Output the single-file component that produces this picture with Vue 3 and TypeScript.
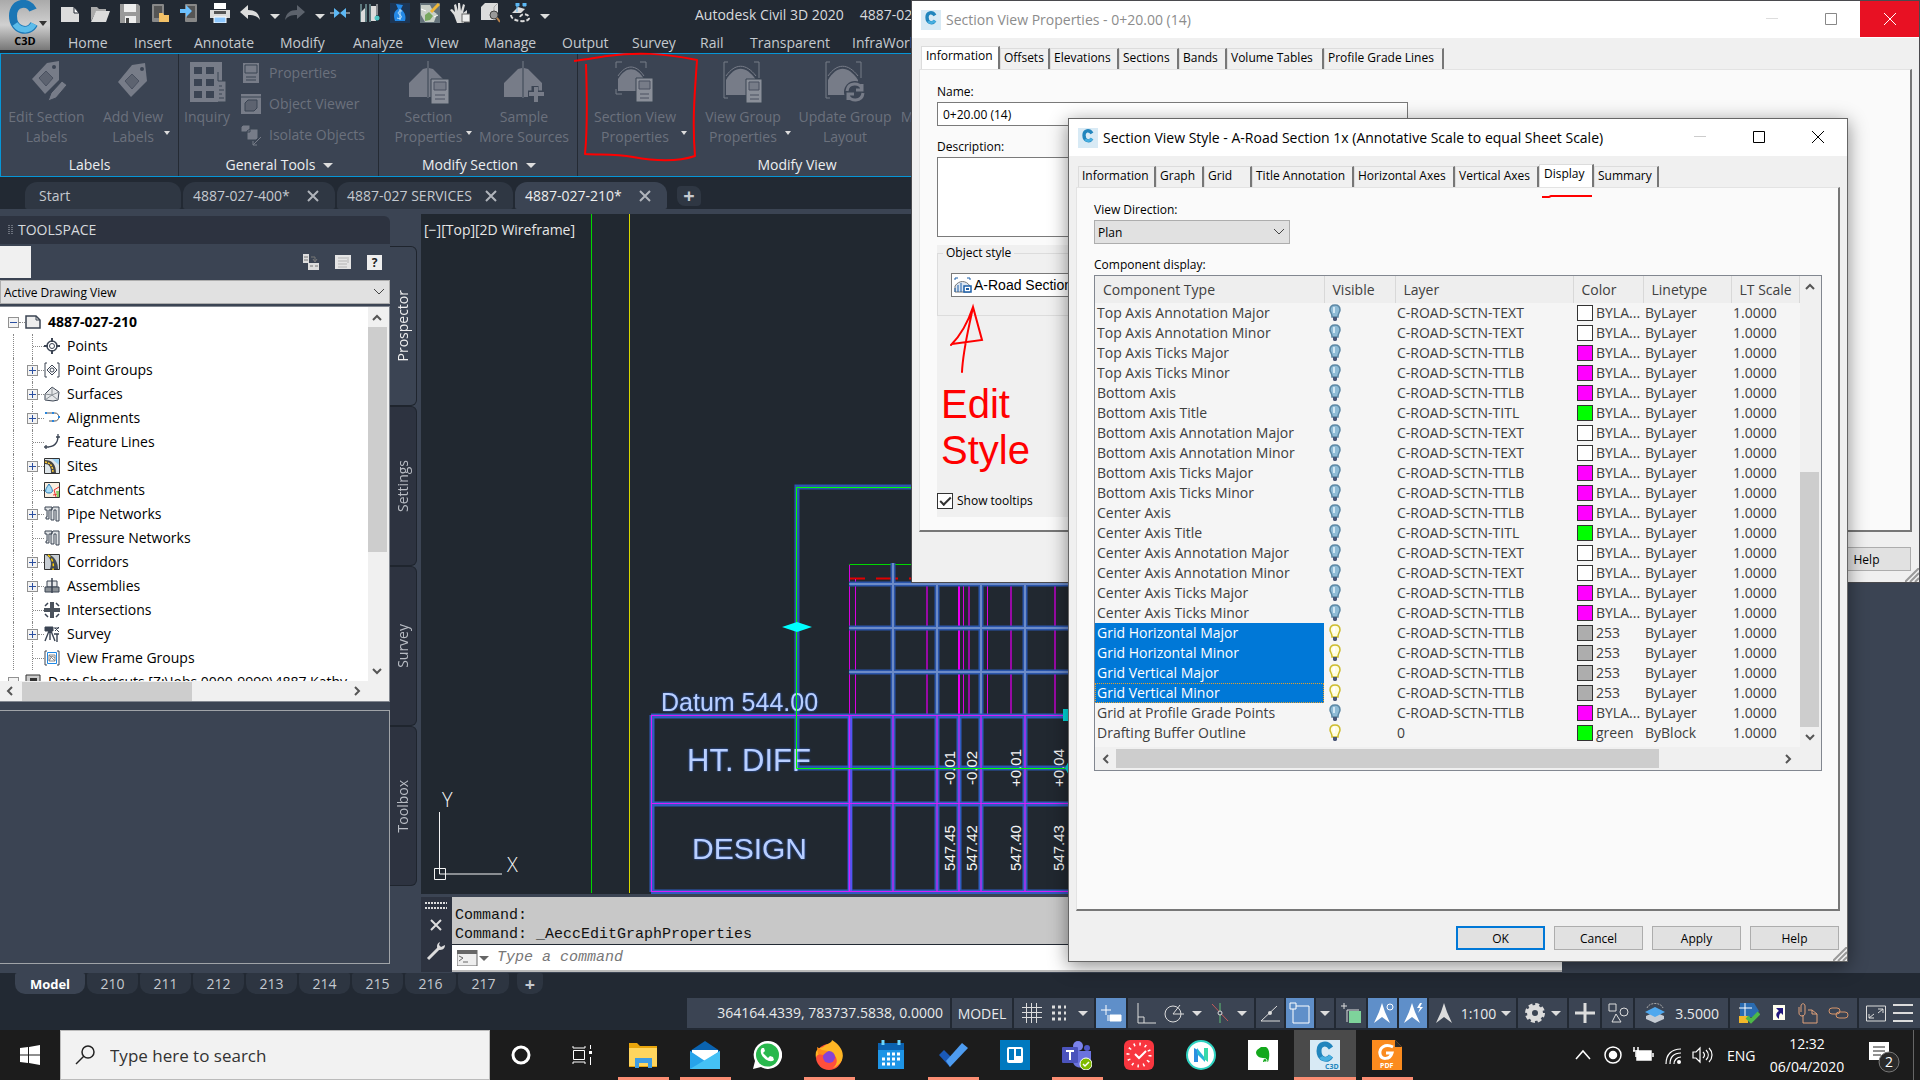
<script setup lang="ts">
import { ref } from 'vue'

interface Tab { label: string; width: number }
interface TreeNode { label: string; icon: string; expandable: boolean }
interface StyleRow { name: string; on?: boolean; layer: string; color: string; colorName: string; linetype?: string; selected?: boolean }
interface RibbonButton { icon: string; lines: string[]; width: number; menu?: boolean }

const light = '#dcdcdc'
const dim = '#777c88'

const icons: Record<string, string> = {
  new: `<path d="M1 4h13l5 6v9H1z" fill="${light}"/><path d="M14 4v6h5z" fill="#fff" stroke="#222933"/>`,
  open: `<path d="M1 18V4h6l2 2h7v3H6z" fill="#aaa"/><path d="M1 19 6 8h14l-4 11z" fill="${light}"/>`,
  save: `<path d="M0 1h18l2 2v17H0z" fill="#999"/><path d="M4 1h12v8H4zM5 13h11v7H5z" fill="#eee"/><path d="M6 15h3v5H6z" fill="#444"/>`,
  tabletOpen: `<rect x="2" y="1" width="12" height="18" rx="1" fill="#888"/><rect x="4" y="3" width="8" height="12" fill="#555"/><path d="M9 19v-9h4l1 2h5v7z" fill="#f3c167"/>`,
  tabletSave: `<rect x="5" y="1" width="12" height="18" rx="1" fill="#888"/><rect x="7" y="3" width="8" height="12" fill="#555"/><path d="M0 6h6V2l6 6-6 6V10H0z" fill="#6cc0ff"/>`,
  print: `<path d="M4 0h12v6H4z" fill="#fff"/><path d="M0 7h20v8H0z" fill="${light}"/><path d="M4 8h12v3H4z" fill="#555"/><path d="M4 14h12v6H4z" fill="#8ec8ff" stroke="#fff"/>`,
  undo: `<path d="M0 9 8 2v5c7 0 11 3 12 10-3-4-6-5-12-5v4z" fill="${light}"/>`,
  redo: `<path d="M20 9 12 2v5C5 7 1 10 0 17c3-4 6-5 12-5v4z" fill="#5c626c"/>`,
  match: `<path d="M0 10h5M15 10h5" stroke="${light}"/><path d="M4 5l6 5-6 5zM16 5l-6 5 6 5z" fill="#5db8f5"/>`,
  sheets: `<path d="M1 1v18M6 1v18M10 1v18" stroke="#9cc" stroke-width="1"/><path d="M1 9l4-4v14H1zM11 3h5v15h-5z" fill="${light}"/><path d="M17 1v11" stroke="#eee"/><circle cx="17" cy="15" r="2.500" fill="#4dc4c4"/>`,
  bag: `<rect width="20" height="20" fill="#1c3554"/><path d="M6 1l7 1-2 4c5 4 5 9 4 12H5C3 12 4 8 8 6z" fill="#2389e8"/><path d="M12 8c-4-1-5 3-2 4s1 5-3 3M10 6v11" stroke="#bde3ff" fill="none"/>`,
  map: `<rect width="20" height="20" fill="#65737b"/><path d="M1 2h9l3 6 4 3-3 8H5L1 12z" fill="#c9d0c8"/><path d="M19 1l-8 8" stroke="#f0b838" stroke-width="3"/><path d="M5 12l4-3 4 4-3 4-5 1z" fill="#78a860"/><path d="M1 6l5 2M14 14l4-2" stroke="#fff"/>`,
  hand: `<path d="M4 12 0 7l2-1 3 3L4 2l2-1 2 7V0h2l1 8 2-7 2 1-2 8 4-3v3l-3 7v3H7z" fill="${light}"/><rect x="12" y="11" width="8" height="8" fill="#eee" stroke="#666"/>`,
  boxZoom: `<path d="M1 4 5 0h13v14l-3 3H1z" fill="${light}"/><path d="M14 4v12M14 4l4-4" stroke="#aaa"/><circle cx="14" cy="12" r="4" fill="#999" stroke="#444"/><path d="m17 15 3 4" stroke="#b8824c" stroke-width="2"/>`,
  orbit: `<path d="M8 4 2 10h9l4-4z" fill="${light}"/><path d="M6 0h3v3H6zM13 0h3v3h-3zM7 1v8" fill="#5db8f5" stroke="#5db8f5"/><path d="M1 12c0 7 18 8 18 3s-8-5-9-1" fill="none" stroke="${light}" stroke-width="2" stroke-dasharray="4 2"/>`,
  points: `<circle cx="8" cy="8" r="5" fill="none" stroke="#3b4453" stroke-width="1.5"/><circle cx="8" cy="8" r="2.500" fill="none" stroke="#3b4453"/><path d="M8 0v4M8 12v4M0 8h4M12 8h4" stroke="#3b4453" stroke-width="2"/>`,
  pointGroups: `<path d="M3 1H1v14h2M13 1h2v14h-2" fill="none" stroke="#3b4453"/><path d="m8 3 5 5-5 5-5-5z" fill="none" stroke="#3b4453"/><circle cx="8" cy="8" r="2" fill="none" stroke="#3b4453"/>`,
  surfaces: `<path d="M8 1l7 5-1 8-5 1-8-1V8z" fill="#e6e8ea" stroke="#3b4453"/><path d="M8 1v8l6 5M8 9l7-3M8 9l-7-1M8 9l-7 5" stroke="#8b9197" fill="none"/>`,
  alignments: `<path d="M1 3h10c5 0 5 8 0 8H5" fill="none" stroke="#555"/><path d="M2 2v2M9 2v2M15 6v2M9 10v2" stroke="#2585e0" stroke-width="2"/>`,
  feature: `<path d="M2 13c8 0 12-3 12-11M0 13h5M2 11v4M12 3h4M14 0v4" fill="none" stroke="#3b4453" stroke-width="1.3"/>`,
  sites: `<path d="M.5.500h15v15H.5z" fill="#dfe6ea" stroke="#333"/><path d="M8 1h7v6z" fill="#9bd2f5"/><path d="M1 2c7 0 11 4 11 13H7c0-6-2-9-6-9z" fill="#444"/><path d="M1 4c6 1 8 5 8 11" stroke="#fc3" stroke-dasharray="2 1" stroke-width="1.500" fill="none"/>`,
  catchments: `<path d="M.5.500h15v15H.5z" fill="#f9eee0" stroke="#333"/><path d="M5 2c5 7 4 9 0 9s-5-2 0-9z" fill="#a9dcf5" stroke="#2b7db5"/><path d="M10 8l5-3M9 13l6-1M10 8l2 7" stroke="#e33"/><path d="M12 9h3v6h-2z" fill="#8c6"/>`,
  pipes: `<path d="M1 1h7v3H5v9H2v-2h1V4H1zM9 1h6v14h-3V4h-2v10H7V4z" fill="#dfe2e5" stroke="#3b4453"/>`,
  corridors: `<path d="M.5.500h15v15H.5z" fill="#c8ced4" stroke="#333"/><path d="M2 1c5 3 6 8 4 14h8C14 9 11 3 6 1z" fill="#444a52"/><path d="M4 1c5 4 6 9 5 15" stroke="#fc0" stroke-width="1.5" stroke-dasharray="3 2" fill="none"/>`,
  assemblies: `<path d="M3 3h10v6H3z" fill="#e6e8ea" stroke="#3b4453"/><path d="M1 9h14v5H1z" fill="#8b9197" stroke="#3b4453"/><path d="M8 0v15" stroke="#3b4453" stroke-width="1.5"/>`,
  intersections: `<path d="M6 0h4v6h6v4h-6v6H6v-6H0V6h6z" fill="#4b525c"/><path d="M1 4l3-3M15 4l-3-3M1 12l3 3M15 12l-3 3" stroke="#3b4453" stroke-width="1.5"/>`,
  survey: `<path d="M1 1h8v4H1zM10 2h5M11 5l4-4M11 2l4 4" fill="#3b4453" stroke="#3b4453"/><path d="M5 5 1 15M6 5v9M7 5l4 10M10 8h5M13 8v8" stroke="#3b4453" stroke-width="1.4"/>`,
  frames: `<path d="M3 1H1v14h2M13 1h2v14h-2" fill="none" stroke="#3b4453"/><path d="M3.500 2.500h9v11h-9z" fill="#fff" stroke="#1e88e5"/><path d="M5 5h6v6H5zM5 5l6 6M5 11l3-5 3 2" stroke="#888" fill="none"/>`,
  tag: `<path d="M33 2 20 4 6 21l13 15 16-16z" fill="${dim}"/><path d="m20 13 7 7-7 8-7-8z" fill="#5d6370" stroke="#4a5160"/><circle cx="30" cy="8" r="2" fill="#3b4453"/>`,
  tagEdit: `<path d="M33 0 21 2 6 18l13 15 14-14z" fill="${dim}"/><path d="m20 10 7 7-7 8-7-8z" fill="#5d6370" stroke="#4a5160"/><circle cx="28" cy="6" r="2" fill="#3b4453"/><path d="m22 40 3-8 11-12 5 4-11 13z" fill="${dim}" stroke="#3b4453"/>`,
  inquiry: `<path d="M4 1h32v40H4z" fill="${dim}"/><path d="M8 6h8v7H8zM20 6h8v7h-8zM8 18h8v7H8zM20 18h8v7h-8zM8 30h8v7H8zM20 30h8v7h-8z" fill="#3b4453"/><path d="M32 11v9h8v21h-8" fill="${dim}" stroke="#3b4453"/><path d="M33 25h3M33 29h5M33 33h3M33 37h5" stroke="#3b4453"/>`,
  section: `<path d="M1 36V22L15 8l4-1v29zM21 7l4 1 14 14v14H21z" fill="${dim}"/><path d="M20 0v37" stroke="${dim}"/>`,
  sectionProps: `<path d="M1 36V22L15 8l4-1v29zM21 7l4 1 14 14v14H21z" fill="${dim}"/><path d="M20 0v37" stroke="${dim}"/><path d="M23 18h18v25H23z" fill="#8a8f99" stroke="#3b4453"/><path d="M26 21h12v8H26zM27 34h10M27 38h10" stroke="#4a5160" fill="${dim}"/>`,
  sectionAdd: `<path d="M1 36V22L15 8l4-1v29zM21 7l4 1 14 14v14H21z" fill="${dim}"/><path d="M20 0v37" stroke="${dim}"/><path d="M32 25v17M25 33h16" stroke="#3b4453" stroke-width="7"/><path d="M33 26v15M26 33h15" stroke="${dim}" stroke-width="4"/>`,
  viewProps: `<path d="M8 1H2v6M26 1h6v6M2 28v5h6" fill="none" stroke="${dim}"/><path d="M4 30V18C12 5 22 5 30 18v12z" fill="${dim}"/><path d="M4 15C12 3 22 3 30 15" fill="none" stroke="${dim}"/><path d="M22 17h17v24H22z" fill="#8a8f99" stroke="#3b4453"/><path d="M25 20h11v8H25zM26 33h9M26 37h9" stroke="#4a5160" fill="${dim}"/>`,
  groupProps: `<path d="M6 1H2v36h4M32 1h5v16" fill="none" stroke="${dim}"/><path d="M4 34V19C13 4 24 4 34 19v15z" fill="${dim}"/><path d="M4 15C13 2 24 2 34 15" fill="none" stroke="${dim}"/><path d="M24 18h16v24H24z" fill="#8a8f99" stroke="#3b4453"/><path d="M27 21h10v8H27zM28 34h9M28 38h9" stroke="#4a5160" fill="${dim}"/>`,
  groupUpdate: `<path d="M6 1H2v36h4M32 1h5v16" fill="none" stroke="${dim}"/><path d="M4 34V19C13 4 24 4 34 19v15z" fill="${dim}"/><path d="M4 15C13 2 24 2 34 15" fill="none" stroke="${dim}"/><circle cx="31" cy="31" r="11" fill="#3b4453"/><path d="M23 30c1-9 13-9 15-2M39 32c-1 9-13 9-15 2M38 23v6h-6M24 39v-6h6" fill="none" stroke="${dim}" stroke-width="3"/>`,
  grid: `<path d="M4.500 0v20M9.500 0v20M14.500 0v20M0 4.500h20M0 9.500h20M0 14.500h20" stroke="${light}" stroke-width="1"/>`,
  snap: `<path d="M2 4h14M2 10h14M2 16h14" stroke="${light}" stroke-width="3" stroke-dasharray="3 3"/>`,
  dyn: `<path d="M5 2v10M0 7h10" stroke="#fff"/><path d="M9 12h11v6H9z" fill="#fff" stroke="#fff"/><path d="M7 12v6" stroke="#fff"/>`,
  ortho: `<path d="M2 0v20h18M2 14h6v6" fill="none" stroke="${light}"/>`,
  polar: `<circle cx="9" cy="11" r="8" fill="none" stroke="${light}"/><path d="M20 11H9l7-9" fill="none" stroke="${light}"/>`,
  iso: `<path d="M10 0v20" stroke="#5fbf75"/><path d="m2 1 16 17" stroke="#c55a5a"/><circle cx="10" cy="10" r="2" fill="#3b4453" stroke="${light}"/>`,
  track: `<path d="M1 18h19M1 18 17 3" stroke="${light}"/><circle cx="10" cy="10" r="2" fill="${light}"/>`,
  osnap: `<path d="M3 3h16v17H3z" fill="none" stroke="#fff"/><path d="M0 0h6v6H0z" fill="#6090c8" stroke="#fff"/>`,
  cycle: `<path d="M3 0v6M0 3h6M6 19V7h12" stroke="${light}" fill="none"/><path d="M8 8h12v12H8z" fill="#7ed39b"/>`,
  annoA: `<path d="m9 0 3 9 5 11-8-6-8 6 5-11z" fill="#fff"/><circle cx="17" cy="4" r="3" fill="none" stroke="#fff"/>`,
  annoB: `<path d="m9 0 3 9 5 11-8-6-8 6 5-11z" fill="#fff"/><path d="m17 0-3 5h3l-2 5 5-6h-3l2-4z" fill="#fff"/>`,
  anno: `<path d="m9 0 3 9 5 11-8-6-8 6 5-11z" fill="${light}"/>`,
  gear: `<circle cx="10" cy="10" r="5.500" fill="none" stroke="${light}" stroke-width="5"/><circle cx="10" cy="10" r="8.500" fill="none" stroke="${light}" stroke-width="3" stroke-dasharray="4 2.670"/>`,
  plus: `<path d="M10 0v20M0 10h20" stroke="${light}" stroke-width="3"/>`,
  isolate: `<path d="M1 1h7v7H1zM4 19l4-8 5 8z" fill="none" stroke="${light}"/><circle cx="16" cy="9" r="4" fill="none" stroke="${light}"/>`,
  layers: `<path d="m10 9 9 4v3l-9 4-9-4v-3z" fill="#c6ccd4"/><path d="m10 4 10 5-10 5L0 9z" fill="#4fa8ee"/><path d="M2 5c2-6 14-6 16 0" fill="none" stroke="#aaa" stroke-dasharray="2 1"/>`,
  geo: `<path d="M1 0h14l5 8-5 6H1z" fill="#2a6bb0"/><path d="M6 0v14M0 5h13" stroke="#fff"/><path d="M0 13h9v7H0z" fill="#f3b82a"/><path d="m8 14 4 4 8-8" fill="none" stroke="#4db848" stroke-width="4"/>`,
  xref: `<path d="M4 2h12v15H4z" fill="#ffe"/><path d="M7 5h7v7l-2-2c-2 1-2 3-2 6-5-4-2-7 0-8z" fill="#22187d"/>`,
  clipDoc: `<path d="M5 12v8h14V11l-5-4h-4M14 7v4h5" fill="none" stroke="#e0a07a"/><path d="M1 4v6c0 4 6 4 6 0V3c0-3-4-3-4 0v6" fill="none" stroke="#e0a07a"/>`,
  link: `<rect x="1" y="5" width="11" height="6" rx="3" fill="none" stroke="#d7956a"/><rect x="8" y="9" width="12" height="6" rx="3" fill="none" stroke="#d7956a"/>`,
  clean: `<path d="M.5 3h19v15H.5z" fill="none" stroke="${light}"/><path d="m3 15 5-4M17 6l-5 4M3 11v4h5M17 10V6h-5" stroke="${light}" fill="none"/>`,
  menu: `<path d="M0 2h20M0 10h20M0 18h20" stroke="${light}" stroke-width="2"/>`,
  explorer: `<path d="M1 3h8l3 3h17v21H1z" fill="#e9a50b"/><path d="M1 8h28v18H1z" fill="#ffd55e"/><path d="M7 28V18h17v10h-4v-5h-9v5z" fill="#3f9de3"/>`,
  mail: `<path d="M0 11 15 1l15 10v17H0z" fill="#0a63b0"/><path d="M2 10h26v11H2z" fill="#fff"/><path d="m0 11 15 10L30 11v18H0z" fill="#27a3ea"/><path d="M0 29 30 11v18z" fill="#45c1f5"/>`,
  whatsapp: `<path d="M15 1a14 14 0 1 1-6 26l-8 2 2-8A14 14 0 0 1 15 1z" fill="#fff"/><circle cx="15.500" cy="15" r="11.500" fill="#29b84d"/><path d="M10 8c-5 5 6 17 12 12l-1-3-3-1-2 2-5-5 2-2-1-3z" fill="#fff"/>`,
  firefox: `<circle cx="15" cy="17" r="13" fill="#ff4f3c"/><path d="M2 18C0 7 8 8 9 7c3-3 9-4 9-7 8 5 14 13 9 22-4 5-8 6-8 6 8-7 2-16-6-16-5 0-11 3-11 6z" fill="#ffb524"/><circle cx="15" cy="17" r="6" fill="#8743d6"/><path d="M3 7l5 3 6 1-5 4-5-1z" fill="#ff8c1a"/>`,
  calendar: `<path d="M2 3h26v26H2z" fill="#1e95e6"/><path d="M2 3h26v7H2z" fill="#0b62b0"/><path d="M7 0v5M23 0v5" stroke="#6cd6ff" stroke-width="3"/><path d="M11 14h14M6 19h19M6 24h14" stroke="#fff" stroke-width="3" stroke-dasharray="3 2"/>`,
  todo: `<path d="M1 15 6 10l7 7-1 10z" fill="#1a59b8"/><path d="M8 21 24 3l6 5-18 19z" fill="#4e9cf0"/>`,
  trello: `<path d="M0 0h30v30H0z" fill="#0079bf"/><rect x="7" y="7" width="16" height="16" rx="2" fill="#fff"/><path d="M9 9h5v11H9zM16 9h5v7h-5z" fill="#0079bf"/>`,
  teams: `<circle cx="16" cy="6" r="5" fill="#7b83eb"/><circle cx="25" cy="8" r="3" fill="#5059c9"/><path d="M11 11h18v10c-3 7-16 10-18 1z" fill="#6b73df"/><rect y="7" width="16" height="16" rx="1" fill="#4b53bc"/><path d="M4 11h8M8 11v9" stroke="#fff" stroke-width="2"/><circle cx="24" cy="24" r="6" fill="#7fba00" stroke="#fff"/><path d="m21 24 2 2 4-4" stroke="#fff" fill="none" stroke-width="1.500"/>`,
  clock: `<rect width="30" height="30" rx="6" fill="#f8363f"/><circle cx="15" cy="15" r="11" fill="none" stroke="#fff" stroke-width="3" stroke-dasharray="1.500 4.260"/><path d="m11 14 4 4 7-7" fill="none" stroke="#fff" stroke-width="2"/>`,
  nitro: `<circle cx="15" cy="15" r="14" fill="#fff" stroke="#2fd3c2" stroke-width="2"/><path d="M8 8l4 2v12H8z" fill="#2b8fe0"/><path d="M11 8l8 10v4L11 14z" fill="#25b6d8"/><path d="M18 8h4v14l-4-3z" fill="#36d9a8"/>`,
  evernote: `<path d="M0 0h30v30H0z" fill="#fff"/><path d="M9 10l4-3h5c4 2 4 10 2 15h-5l1-4c-3 0-8-1-8-6z" fill="#13a81c"/><path d="M15 19c3-1 4 0 4 3h-3" stroke="#fff" fill="none"/>`,
  civil: `<path d="M0 0h30v30H0z" fill="#d8eaf5"/><path d="M21 8C17 2 9 3 9 11s8 11 12 5" fill="none" stroke="#2185bd" stroke-width="5"/><path d="M11 17c2 3 7 3 10-1" fill="none" stroke="#47afe0" stroke-width="4"/>`,
  foxit: `<path d="M0 0h23l7 7v23H0z" fill="#fb8b1e"/><path d="M23 0v7h7z" fill="#2a2a2a"/><path d="M21 7C13 3 7 8 8 14s10 6 12-1h-6" fill="none" stroke="#fff" stroke-width="3"/>`,
}

const quick = ['new', 'open', 'save', 'tabletOpen', 'tabletSave', 'print', 'undo', 'caret', 'redo', 'caret', 'match', 'sheets', 'bag', 'map', 'hand', 'boxZoom', 'orbit', 'caret']
const menus = ['Home', 'Insert', 'Annotate', 'Modify', 'Analyze', 'View', 'Manage', 'Output', 'Survey', 'Rail', 'Transparent', 'InfraWorks']

const labelButtons: RibbonButton[] = [
  { icon: 'tagEdit', lines: ['Edit Section', 'Labels'], width: 91 },
  { icon: 'tag', lines: ['Add View', 'Labels'], width: 82, menu: true },
]
const sectionButtons: RibbonButton[] = [
  { icon: 'sectionProps', lines: ['Section', 'Properties'], width: 95, menu: true },
  { icon: 'sectionAdd', lines: ['Sample', 'More Sources'], width: 96 },
]
const viewButtons: RibbonButton[] = [
  { icon: 'viewProps', lines: ['Section View', 'Properties'], width: 112, menu: true },
  { icon: 'groupProps', lines: ['View Group', 'Properties'], width: 104, menu: true },
  { icon: 'groupUpdate', lines: ['Update Group', 'Layout'], width: 100 },
]

const files: Tab[] = [
  { label: 'Start', width: 156 },
  { label: '4887-027-400*', width: 152 },
  { label: '4887-027 SERVICES', width: 176 },
  { label: '4887-027-210*', width: 152 },
]
const activeFile = ref(3)

const tree: TreeNode[] = [
  { label: 'Points', icon: 'points', expandable: false },
  { label: 'Point Groups', icon: 'pointGroups', expandable: true },
  { label: 'Surfaces', icon: 'surfaces', expandable: true },
  { label: 'Alignments', icon: 'alignments', expandable: true },
  { label: 'Feature Lines', icon: 'feature', expandable: false },
  { label: 'Sites', icon: 'sites', expandable: true },
  { label: 'Catchments', icon: 'catchments', expandable: false },
  { label: 'Pipe Networks', icon: 'pipes', expandable: true },
  { label: 'Pressure Networks', icon: 'pipes', expandable: false },
  { label: 'Corridors', icon: 'corridors', expandable: true },
  { label: 'Assemblies', icon: 'assemblies', expandable: true },
  { label: 'Intersections', icon: 'intersections', expandable: false },
  { label: 'Survey', icon: 'survey', expandable: true },
  { label: 'View Frame Groups', icon: 'frames', expandable: false },
]
const sideTabs = ['Prospector', 'Settings', 'Survey', 'Toolbox']
const layouts = ['210', '211', '212', '213', '214', '215', '216', '217']

const bandColumns = [
  { x: 950, diff: '-0.01', design: '547.45' },
  { x: 972, diff: '-0.02', design: '547.42' },
  { x: 1016, diff: '+0.01', design: '547.40' },
  { x: 1059, diff: '+0.04', design: '547.43' },
]

const propertyTabs: Tab[] = [
  { label: 'Information', width: 79 },
  { label: 'Offsets', width: 50 },
  { label: 'Elevations', width: 69 },
  { label: 'Sections', width: 60 },
  { label: 'Bands', width: 48 },
  { label: 'Volume Tables', width: 97 },
  { label: 'Profile Grade Lines', width: 120 },
]
const styleTabs: Tab[] = [
  { label: 'Information', width: 78 },
  { label: 'Graph', width: 48 },
  { label: 'Grid', width: 48 },
  { label: 'Title Annotation', width: 102 },
  { label: 'Horizontal Axes', width: 101 },
  { label: 'Vertical Axes', width: 84 },
  { label: 'Display', width: 55 },
  { label: 'Summary', width: 65 },
]

const text = 'C-ROAD-SCTN-TEXT'
const ttlb = 'C-ROAD-SCTN-TTLB'
const titl = 'C-ROAD-SCTN-TITL'
const row = (name: string, layer: string): StyleRow => ({
  name, layer, colorName: 'BYLA...',
  color: layer === text ? '#ffffff' : layer === titl ? '#00ff00' : '#ff00ff',
})
const gridRow = (name: string): StyleRow => ({ name, on: true, layer: ttlb, color: '#adadad', colorName: '253', selected: true })
const rows: StyleRow[] = [
  row('Top Axis Annotation Major', text),
  row('Top Axis Annotation Minor', text),
  row('Top Axis Ticks Major', ttlb),
  row('Top Axis Ticks Minor', ttlb),
  row('Bottom Axis', ttlb),
  row('Bottom Axis Title', titl),
  row('Bottom Axis Annotation Major', text),
  row('Bottom Axis Annotation Minor', text),
  row('Bottom Axis Ticks Major', ttlb),
  row('Bottom Axis Ticks Minor', ttlb),
  row('Center Axis', ttlb),
  row('Center Axis Title', titl),
  row('Center Axis Annotation Major', text),
  row('Center Axis Annotation Minor', text),
  row('Center Axis Ticks Major', ttlb),
  row('Center Axis Ticks Minor', ttlb),
  gridRow('Grid Horizontal Major'),
  gridRow('Grid Horizontal Minor'),
  gridRow('Grid Vertical Major'),
  gridRow('Grid Vertical Minor'),
  row('Grid at Profile Grade Points', ttlb),
  { name: 'Drafting Buffer Outline', on: true, layer: '0', color: '#00ff00', colorName: 'green', linetype: 'ByBlock' },
]

const status: { width: number; items: string[]; on?: boolean }[] = [
  { width: 80, items: ['grid', 'snap', 'caret'] },
  { width: 30, items: ['dyn'], on: true },
  { width: 126, items: ['ortho', 'polar', 'caret', 'iso', 'caret'] },
  { width: 28, items: ['track'] },
  { width: 28, items: ['osnap'], on: true },
  { width: 18, items: ['caret'] },
  { width: 30, items: ['cycle'] },
  { width: 29, items: ['annoA'], on: true },
  { width: 28, items: ['annoB'], on: true },
  { width: 87, items: ['anno', '=1:100', 'caret'] },
  { width: 49, items: ['gear', 'caret'] },
  { width: 31, items: ['plus'] },
  { width: 31, items: ['isolate'] },
  { width: 93, items: ['layers', '=3.5000'] },
  { width: 127, items: ['geo', 'xref', 'clipDoc', 'link'] },
  { width: 61, items: ['clean', 'menu'] },
]

const apps = [
  { icon: 'explorer', open: true }, { icon: 'mail', open: true }, { icon: 'whatsapp', open: false },
  { icon: 'firefox', open: true }, { icon: 'calendar', open: false }, { icon: 'todo', open: true },
  { icon: 'trello', open: false }, { icon: 'teams', open: true }, { icon: 'clock', open: false },
  { icon: 'nitro', open: false }, { icon: 'evernote', open: false }, { icon: 'civil', open: true },
  { icon: 'foxit', open: true },
]

const command = ref('')
const search = ref('')
const sectionName = ref('0+20.00 (14)')
const tooltips = ref(true)
</script>

<template>
  <div class="desktop">
    <header class="top">
      <button class="appmenu" aria-label="Application menu">
        <svg width="46" height="34" viewBox="0 0 46 34">
          <path d="M31 10C27 1 11 1 11 16s16 18 21 8" fill="none" stroke="#1b76b5" stroke-width="8" />
          <path d="M13 24c5 7 14 8 19 0" fill="none" stroke="#5cbcea" stroke-width="6" />
          <path d="M37 21h8l-4 5z" fill="#333" />
        </svg>
        <b>C3D</b>
      </button>
      <div class="bars">
        <div class="quick">
          <template v-for="(q, i) in quick" :key="i">
            <button v-if="q === 'caret'" class="mini" aria-label="More"><i class="caret"></i></button>
            <button v-else class="qbtn" :aria-label="q"><svg width="20" height="20" viewBox="0 0 20 20" v-html="icons[q]"></svg></button>
          </template>
          <span class="apptitle"><span>Autodesk Civil 3D 2020</span><span>4887-027-210.dwg</span></span>
        </div>
        <nav class="menus"><a v-for="m in menus" :key="m" href="#">{{ m }}</a></nav>
      </div>
    </header>

    <section class="ribbon">
      <div class="panel p-labels">
        <div class="tools">
          <button v-for="b in labelButtons" :key="b.lines[0]" class="big" :style="{ width: b.width + 'px' }">
            <svg width="42" height="44" viewBox="0 0 42 44" v-html="icons[b.icon]"></svg>
            <span v-for="l in b.lines" :key="l">{{ l }}</span><i v-if="b.menu" class="caret tiny"></i>
          </button>
        </div>
        <h2>Labels</h2>
      </div>
      <div class="panel p-general">
        <div class="tools">
          <button class="big inquiry"><svg width="42" height="44" viewBox="0 0 42 44" v-html="icons.inquiry"></svg><span>Inquiry</span></button>
          <div class="stack">
            <button><svg width="20" height="22" viewBox="0 0 20 22"><path d="M2 1h16v20H2z" :fill="dim" /><path d="M4 3h12v8H4zM5 15h10M5 18h10" fill="none" stroke="#3b4453" /></svg>Properties</button>
            <button><svg width="20" height="22" viewBox="0 0 20 22"><path d="M0 1h20v20H0z" :fill="dim" /><path d="M0 4h20M4 10l3-3h9v8l-3 3H4z" fill="#5d6370" stroke="#3b4453" /></svg>Object Viewer</button>
            <button><svg width="20" height="22" viewBox="0 0 20 22"><path d="M0 3l2-2h7v7H0zM6 7l3-2h8v9l-2 2H6z" :fill="dim" stroke="#3b4453" /><path d="m20 13-8 8M12 17v4h4" stroke="#777c88" fill="none" /></svg>Isolate Objects</button>
          </div>
        </div>
        <h2>General Tools <i class="caret"></i></h2>
      </div>
      <div class="panel p-section">
        <div class="tools">
          <button v-for="b in sectionButtons" :key="b.lines[0]" class="big" :style="{ width: b.width + 'px' }">
            <svg width="42" height="44" viewBox="0 0 42 44" v-html="icons[b.icon]"></svg>
            <span v-for="l in b.lines" :key="l">{{ l }}</span><i v-if="b.menu" class="caret tiny"></i>
          </button>
        </div>
        <h2>Modify Section <i class="caret"></i></h2>
      </div>
      <div class="panel p-view">
        <div class="tools">
          <button v-for="b in viewButtons" :key="b.lines[0]" class="big" :style="{ width: b.width + 'px' }">
            <svg width="42" height="44" viewBox="0 0 42 44" v-html="icons[b.icon]"></svg>
            <span v-for="l in b.lines" :key="l">{{ l }}</span><i v-if="b.menu" class="caret tiny"></i>
          </button>
          <button class="big more"><svg width="42" height="44"></svg><span>M</span></button>
          <svg class="markup" width="136" height="112" viewBox="570 50 136 112">
            <path d="M574 61c8-1 20-3 33-5 30-4 55-3 90 4-2 30-5 60-2 96-18 6-40 5-62 1-18-3-30-2-48-3 3-30 2-60 1-90" fill="none" stroke="#f00" stroke-width="2" stroke-linejoin="round" />
          </svg>
        </div>
        <h2>Modify View</h2>
      </div>
    </section>

    <nav class="files">
      <button v-for="(f, i) in files" :key="f.label" class="file" :class="{ active: i === activeFile, home: i === 0 }" :style="{ width: f.width + 'px' }" @click="activeFile = i">
        {{ f.label }}<svg v-if="i" width="12" height="12" viewBox="0 0 12 12"><path d="m1 1 10 10M11 1 1 11" stroke="#b0b4bb" stroke-width="2" /></svg>
      </button>
      <button class="addtab" aria-label="New drawing">+</button>
    </nav>

    <main class="work">
      <aside class="toolspace">
        <div class="ts-main">
          <h2 class="ts-head"><svg width="5" height="10" viewBox="0 0 5 10"><path d="M1 0v10M4 0v10" stroke="#aeb3bb" stroke-dasharray="1 1" /></svg>TOOLSPACE</h2>
          <div class="ts-tools">
            <span class="blank"></span>
            <button aria-label="Panorama"><svg width="16" height="16" viewBox="0 0 16 16"><path d="M0 0h6v9H0zM5 9h11v7H5z" fill="#ddd" /><path d="M1 3h4M1 6h4M7 12h3M12 12h3M8 3h4v4M10 5l2 3 2-3" stroke="#777" fill="none" /></svg></button>
            <button aria-label="Preview"><svg width="16" height="16" viewBox="0 0 16 16"><path d="M0 1h16v14H0z" fill="#e4e4e4" /><path d="M3 4h9M3 7h9M3 10h9M3 13h9M13 3v6" stroke="#b4b4b4" /></svg></button>
            <button class="help" aria-label="Help">?</button>
          </div>
          <select class="viewsel" aria-label="View"><option>Active Drawing View</option></select>
          <div class="tree">
            <div class="tree-row">
              <ul class="nodes">
                <li class="root"><i class="tog minus"></i><i class="dots"></i><svg width="16" height="14" viewBox="0 0 16 14"><path d="M1 1h10l4 4v8H1z" fill="#eee" stroke="#3b4453" stroke-width="1.500" /><path d="M11 1v4h4" fill="none" stroke="#3b4453" /></svg><b>4887-027-210</b></li>
                <li v-for="n in tree" :key="n.label" class="child">
                  <i v-if="n.expandable" class="tog"></i><i class="dots" :class="{ long: !n.expandable }"></i>
                  <svg width="16" height="16" viewBox="0 0 16 16" v-html="icons[n.icon]"></svg><span>{{ n.label }}</span>
                </li>
                <li class="root"><i class="tog minus"></i><i class="dots"></i><svg width="16" height="16" viewBox="0 0 16 16"><path d="M1 1h14v14H1z" fill="#ccc" stroke="#333" /><path d="M5 4h7v7l-3-2-4 4z" fill="#333" /></svg><span>Data Shortcuts [Z:\Jobs 0000-9999\4887 Kathy</span></li>
              </ul>
              <div class="vbar"><svg width="18" height="20" viewBox="0 0 18 20"><path d="m5 13 4-4 4 4" /></svg><i class="thumb tree-v"></i><svg class="end" width="18" height="20" viewBox="0 0 18 20"><path d="m5 8 4 4 4-4" /></svg></div>
            </div>
            <div class="hbar"><svg width="22" height="18" viewBox="0 0 22 18"><path d="m12 5-4 4 4 4" /></svg><i class="thumb tree-h"></i><svg class="end tree-end" width="20" height="18" viewBox="0 0 20 18"><path d="m8 5 4 4-4 4" /></svg></div>
          </div>
          <div class="itemview"></div>
        </div>
        <div class="sidetabs">
          <button v-for="(s, i) in sideTabs" :key="s" :class="{ active: i === 0 }"><span>{{ s }}</span></button>
        </div>
      </aside>

      <section class="center">
        <div class="viewport">
          <svg width="100%" height="100%">
            <g transform="translate(-421 -214)">
              <text x="424" y="235" class="vp">[−][Top][2D Wireframe]</text>
              <path d="M591.500 214v679" stroke="#00d800" /><path d="M629.500 214v679" stroke="#d8d800" />
              <g stroke="#f4f4f4" fill="none"><path d="M439.500 812v62H502M434.500 868.500h11v11h-11z" /></g>
              <text x="442" y="807" class="ucs">Y</text><text x="507" y="872" class="ucs">X</text>
              <g fill="none" stroke="#2a58b0" stroke-width="5"><path d="M912 487H797v281h280" /></g>
              <path d="M849.500 715V564.500H912" fill="none" stroke="#00d800" />
              <path d="M849 578.500h16M876 578.500h22M909 578.500h10" stroke="#e00000" stroke-width="2" />
              <path d="M849.500 565v150M855.500 579v136M963.500 579v136M987.500 579v136" stroke="#d800e0" />
              <path d="M959 579v136" stroke="#e800f0" stroke-width="2" />
              <path d="M927 579v136M969 579v136M1011 579v136M1055 579v136" stroke="#980aa5" stroke-width="2" />
              <g fill="none"><path v-for="s in [['#2a55ab', 5], ['#6c8bc8', 2]]" :key="s[0]" :stroke="s[0]" :stroke-width="s[1]" d="M849 584h228M849 628h228M849 672h228M893 563v152M937 584v131M981 584v131M1025 584v131" /></g>
              <path d="M651 716h426M651 804h426M651 892h426M652 715v177M850 715v177M893 715v177M937 715v177M959 715v177M981 715v177M1025 715v177" fill="none" stroke="#2f5cc0" stroke-width="5" />
              <path d="M893 715v177M937 715v177M959 715v177M981 715v177M1025 715v177" fill="none" stroke="#9238e6" stroke-width="2" />
              <path d="M850 715v177" stroke="#5a50f0" stroke-width="4" />
              <path d="M651 715.500h426M651 803.500h426M651 891.500h426M651.500 715v177M849.500 715v177" fill="none" stroke="#d81cf8" />
              <g class="glow"><text x="661" y="711" font-size="25">Datum 544.00</text><text x="687" y="771" font-size="31">HT. DIFF</text><text x="692" y="859" font-size="30">DESIGN</text></g>
              <g v-for="c in bandColumns" :key="c.x" class="cells">
                <text :transform="`translate(${c.x + 5} 768) rotate(-90)`">{{ c.diff }}</text>
                <text :transform="`translate(${c.x + 5} 848) rotate(-90)`">{{ c.design }}</text>
              </g>
              <path d="M912 487.500H796.500v281h280" fill="none" stroke="#00ff00" />
              <path d="m782 627 15-5 15 5-15 5z" fill="#0ff" /><path d="M1063 709h11v12h-11zM1065 768l6-11v22z" fill="#00e0e0" />
            </g>
          </svg>
        </div>
        <div class="cmd">
          <div class="cmdgrip">
            <svg width="22" height="7" viewBox="0 0 22 7"><path d="M0 1h22M0 6h22" stroke="#ddd" stroke-width="2" stroke-dasharray="2 1" /></svg>
            <svg width="12" height="12" viewBox="0 0 12 12"><path d="m1 1 10 10M11 1 1 11" stroke="#ddd" stroke-width="2" /></svg>
            <svg width="20" height="20" viewBox="0 0 20 20"><path d="M2 18 13 7" stroke="#ddd" stroke-width="3" /><path d="M14 1c-4 1-4 8 0 8s5-3 5-5l-4 2-2-2z" fill="#ddd" /></svg>
          </div>
          <div class="console">
            <div class="log"><p>Command:</p><p>Command: _AeccEditGraphProperties</p></div>
            <label class="prompt">
              <svg width="32" height="16" viewBox="0 0 32 16"><path d="M0 0h20v16H0z" fill="#eee" stroke="#666" /><path d="M0 0h20v4H0z" fill="#666" /><path d="m2 6 4 2-4 3M6 12h5" stroke="#666" fill="none" /><path d="M22 6h10l-5 5z" fill="#666" /></svg>
              <input v-model="command" placeholder="Type a command" aria-label="Command" />
            </label>
          </div>
        </div>
      </section>
      <div class="dock"></div>
    </main>

    <nav class="layouts">
      <button class="model">Model</button><button v-for="l in layouts" :key="l">{{ l }}</button><button class="addlayout" aria-label="New layout">+</button>
    </nav>

    <footer class="status">
      <output class="coords">364164.4339, 783737.5838, 0.0000</output>
      <button class="cell space">MODEL</button>
      <div v-for="(s, i) in status" :key="i" class="cell" :class="{ on: s.on }" :style="{ width: s.width + 'px' }">
        <template v-for="(it, j) in s.items" :key="j">
          <i v-if="it === 'caret'" class="caret"></i>
          <span v-else-if="it[0] === '='">{{ it.slice(1) }}</span>
          <button v-else :aria-label="it"><svg width="22" height="22" viewBox="-1 -1 22 22" v-html="icons[it]"></svg></button>
        </template>
      </div>
    </footer>

    <footer class="taskbar">
      <button class="start" aria-label="Start"><svg width="20" height="20" viewBox="0 0 20 20"><path d="M0 3l8-1v7.500H0zM9 2l11-2v9.500H9zM0 10.500h8V18l-8-1zM9 10.500h11V20L9 18z" fill="#fff" /></svg></button>
      <label class="search">
        <svg width="20" height="20" viewBox="0 0 20 20"><circle cx="13" cy="7" r="6" fill="none" stroke="#222" stroke-width="1.500" /><path d="m9 11-8 8" stroke="#222" stroke-width="1.500" /></svg>
        <input v-model="search" placeholder="Type here to search" aria-label="Search" />
      </label>
      <button class="sys" aria-label="Cortana"><svg width="20" height="20" viewBox="0 0 20 20"><circle cx="10" cy="10" r="8" fill="none" stroke="#fff" stroke-width="3" /></svg></button>
      <button class="sys" aria-label="Task view"><svg width="20" height="20" viewBox="0 0 20 20"><path d="M1.500 5.500h11v9h-11zM1 3V1M13 3V1M1 3h12M1 19v-2h12v2M18.500 0v4M18.500 12v8" fill="none" stroke="#fff" /><path d="M17 6h3v3h-3z" fill="#fff" /></svg></button>
      <button v-for="a in apps" :key="a.icon" class="app" :class="{ open: a.open, current: a.icon === 'civil' }" :aria-label="a.icon">
        <svg width="30" height="30" viewBox="0 0 30 30"><g v-html="icons[a.icon]"></g><text v-if="a.icon === 'civil'" x="15" y="29" font-size="7" font-weight="bold" fill="#2185bd">C3D</text><text v-if="a.icon === 'foxit'" x="8" y="28" font-size="7" font-weight="bold" fill="#fff">PDF</text></svg>
      </button>
      <div class="tray">
        <svg width="140" height="22" viewBox="0 0 140 22" fill="none" stroke="#fff" stroke-width="1.500">
          <path d="m2 15 7-8 7 8" /><circle cx="39" cy="11" r="8" /><circle cx="39" cy="11" r="3.500" fill="#fff" />
          <path d="M63 7h14v9H63z" fill="#fff" /><path d="M79 9v4M60 3v4M64 3v4M59 7h6M62 8v5" />
          <path d="M92 20C92 10 98 5 107 5M96 20c0-7 4-11 11-11M100 20c0-4 3-7 7-7" stroke-width="1.200" /><circle cx="105" cy="18" r="2" fill="#fff" stroke="none" />
          <path d="M119 8h3l4-4v14l-4-4h-3zM129 8c2 2 2 4 0 6M132 6c3 3 3 7 0 10M135 4c4 4 4 10 0 14" stroke-width="1.200" />
        </svg>
        <span class="lang">ENG</span>
        <time class="clock"><span>12:32</span><span>06/04/2020</span></time>
        <svg class="note" width="34" height="34" viewBox="0 0 34 34"><path d="M2 2h20v18h-6l-4 5v-5H2z" fill="#fff" /><path d="M6 7h12M6 11h12M6 15h8" stroke="#222" /><circle cx="22" cy="22" r="10" fill="#2a2a2a" stroke="#777" /><text x="18" y="27" font-size="14" fill="#fff">2</text></svg>
        <i class="peek"></i>
      </div>
    </footer>

    <section class="dialog props" role="dialog" aria-label="Section View Properties">
      <header class="caption faded">
        <svg width="20" height="20" viewBox="0 0 30 30"><g v-html="icons.civil"></g></svg><h1>Section View Properties - 0+20.00 (14)</h1>
        <button aria-label="Minimize" class="min"><svg width="12" height="12"><path d="M0 5.500h12" stroke="#ddd" /></svg></button>
        <button aria-label="Maximize"><svg width="12" height="12"><path d="M.5.500h11v11H.5z" fill="none" stroke="#888" /></svg></button>
        <button aria-label="Close" class="close"><svg width="12" height="12"><path d="m0 0 12 12M12 0 0 12" stroke="#fff" /></svg></button>
      </header>
      <div class="dbody">
        <div class="tabs" role="tablist"><button v-for="(t, i) in propertyTabs" :key="t.label" role="tab" :class="{ active: i === 0 }" :style="{ width: t.width + 'px' }">{{ t.label }}</button></div>
        <div class="page">
          <label for="sv-name">Name:</label><input id="sv-name" v-model="sectionName" class="field" />
          <label for="sv-desc" class="second">Description:</label><textarea id="sv-desc" class="field area"></textarea>
          <div class="group">
            <fieldset><legend>Object style</legend>
              <button class="stylecombo"><svg width="18" height="16" viewBox="0 0 18 16"><path d="M1 15V9c4-6 11-6 15 0v6z" fill="#dbe6f3" stroke="#777" /><path d="M4 8v7M7 6v9M1 3V1h3M13 1h3v2M1 15v-4" stroke="#1d5fa8" fill="none" /><path d="M10 9h7v6h-7z" fill="#fff" stroke="#1d5fa8" stroke-width="1.500" /><path d="M12 11h3v2h-3z" fill="#1d5fa8" /></svg>A-Road Section 1x</button>
            </fieldset>
            <label class="check"><input v-model="tooltips" type="checkbox" />Show tooltips</label>
          </div>
        </div>
        <div class="buttons"><button>Help</button></div>
      </div>
      <svg class="grip" width="14" height="14" viewBox="0 0 14 14"><path d="M0 14 14 0M5 14l9-9M10 14l4-4" stroke="#999" stroke-width="2" /></svg>
      <div class="note-edit">
        <svg width="40" height="70" viewBox="948 302 40 70"><path d="M962 371c1-22 6-40 11-65M951 344c9-9 16-20 22-38l9 33-30 4" fill="none" stroke="#f00" stroke-width="2" stroke-linecap="round" /></svg>
        <p>Edit</p><p>Style</p>
      </div>
    </section>

    <section class="dialog style" role="dialog" aria-label="Section View Style">
      <header class="caption">
        <svg width="20" height="20" viewBox="0 0 30 30"><g v-html="icons.civil"></g></svg><h1>Section View Style - A-Road Section 1x (Annotative Scale to equal Sheet Scale)</h1>
        <button aria-label="Minimize" class="min"><svg width="12" height="12"><path d="M0 5.500h12" stroke="#ccc" /></svg></button>
        <button aria-label="Maximize"><svg width="12" height="12"><path d="M.5.500h11v11H.5z" fill="none" stroke="#000" /></svg></button>
        <button aria-label="Close"><svg width="12" height="12"><path d="m0 0 12 12M12 0 0 12" stroke="#000" /></svg></button>
      </header>
      <div class="dbody">
        <div class="tabs" role="tablist"><button v-for="(t, i) in styleTabs" :key="t.label" role="tab" :class="{ active: i === 6 }" :style="{ width: t.width + 'px' }">{{ t.label }}<svg v-if="i === 6" class="underline" width="50" height="4" viewBox="0 0 50 4"><path d="M0 3h7l2-1h41" fill="none" stroke="#f00" stroke-width="2" /></svg></button></div>
        <div class="page">
          <label for="dir">View Direction:</label>
          <select id="dir" class="dir"><option>Plan</option></select>
          <p class="second caption-text">Component display:</p>
          <div class="listbox">
            <div class="listtop">
              <div class="tablewrap">
                <table>
                  <colgroup><col class="c1" /><col class="c2" /><col class="c3" /><col class="c4" /><col class="c5" /><col /></colgroup>
                  <thead><tr><th>Component Type</th><th>Visible</th><th>Layer</th><th>Color</th><th>Linetype</th><th>LT Scale</th></tr></thead>
                  <tbody>
                    <tr v-for="(r, i) in rows" :key="r.name">
                      <td :class="{ sel: r.selected, focus: i === 19 }">{{ r.name }}</td>
                      <td class="bulb"><svg width="14" height="18" viewBox="0 0 14 18">
                        <path d="M7 1C3 1 2 4 2 6s2 3 2 7h6c0-4 2-5 2-7s-1-5-5-5z" :fill="r.on ? '#fffde0' : '#8fbbd6'" :stroke="r.on ? '#cdbb2c' : '#5b87a5'" stroke-width="1.500" />
                        <path d="M5 3h2v6H5z" :fill="r.on ? '#fff' : '#d3e8f4'" /><path d="M5 13h4v3l-1 1H6l-1-1z" fill="#4c5878" /></svg></td>
                      <td>{{ r.layer }}</td>
                      <td class="col"><span><i class="swatch" :style="{ background: r.color }"></i>{{ r.colorName }}</span></td>
                      <td>{{ r.linetype ?? 'ByLayer' }}</td>
                      <td>1.0000</td>
                    </tr>
                  </tbody>
                </table>
              </div>
              <div class="vbar"><svg width="20" height="20" viewBox="0 0 20 20"><path d="m6 13 4-4 4 4" /></svg><i class="thumb list-v"></i><svg class="end" width="20" height="20" viewBox="0 0 20 20"><path d="m6 8 4 4 4-4" /></svg></div>
            </div>
            <div class="hbar"><svg width="21" height="20" viewBox="0 0 21 20"><path d="m13 6-4 4 4 4" /></svg><i class="thumb list-h"></i><svg class="end list-end" width="20" height="20" viewBox="0 0 20 20"><path d="m8 6 4 4-4 4" /></svg></div>
          </div>
        </div>
        <div class="buttons"><button class="default">OK</button><button>Cancel</button><button>Apply</button><button>Help</button></div>
      </div>
      <svg class="grip" width="14" height="14" viewBox="0 0 14 14"><path d="M0 14 14 0M5 14l9-9M10 14l4-4" stroke="#999" stroke-width="2" /></svg>
    </section>
  </div>
</template>

<style>
body { margin: 0; background: #222933; }
</style>

<style scoped>
* { box-sizing: border-box; }
.desktop { position: relative; min-height: 100vh; display: flex; flex-direction: column; overflow: hidden; background: #222933; color: #c5c9cf; font-family: "Open Sans", "Noto Sans", sans-serif; font-size: 14px; }
button { font: inherit; color: inherit; background: none; border: 0; padding: 0; margin: 0; }
h1, h2, p, ul { margin: 0; padding: 0; font-weight: 400; }
svg { flex: none; display: block; }
a { color: inherit; text-decoration: none; }
.caret { display: inline-block; flex: none; border: 5px solid transparent; border-top-color: #ddd; border-bottom: 0; }
.caret.tiny { position: absolute; right: 4px; top: 77px; border-width: 4px 3px 0; }

.top { height: 53px; display: flex; flex: none; }
.appmenu { width: 50px; height: 50px; background: linear-gradient(#aaa, #d0d0d0 50%, #777); display: flex; flex-direction: column; align-items: center; color: #000; font-size: 11px; line-height: 13px; }
.bars { flex: 1; min-width: 0; }
.quick { height: 26px; display: flex; align-items: center; padding-left: 10px; }
.qbtn { width: 20px; margin-right: 10px; }
.mini { width: 8px; margin: 0 7px 0 0; }
.apptitle { display: flex; gap: 16px; margin-left: 140px; color: #d8dade; line-height: 20px; padding-top: 3px; white-space: nowrap; }
.menus { display: grid; grid-template-columns: 66px 60px 86px 73px 75px 56px 78px 70px 68px 50px 102px auto; padding-left: 18px; line-height: 20px; padding-top: 7px; }

.ribbon { flex: none; height: 124px; display: flex; background: #3b4453; border: 1px solid #0696d7; }
.panel { flex: none; border-right: 1px solid #242a33; display: flex; flex-direction: column; padding-left: 2px; overflow: hidden; }
.panel h2 { font-size: 14px; line-height: 20px; padding-bottom: 1px; text-align: center; color: #eceef0; display: flex; justify-content: center; align-items: center; gap: 8px; }
.p-labels { width: 178px; padding-left: 0; }
.p-general { width: 200px; }
.p-section { width: 199px; }
.p-view { flex: 1; overflow: visible; padding-left: 1px; }
.p-view h2 { width: 436px; }
.tools { display: flex; flex: 1; position: relative; color: #6b717d; }
.big { position: relative; display: flex; flex-direction: column; align-items: center; padding-top: 7px; flex: none; line-height: 20px; white-space: nowrap; }
.big svg { margin-bottom: 2px; }
.inquiry { width: 52px; }
.more { width: 24px; }
.stack { display: flex; flex-direction: column; gap: 9px; padding: 8px 0 0 8px; }
.stack button { display: flex; gap: 8px; align-items: center; line-height: 22px; }
.markup { position: absolute; left: -9px; top: -4px; }

.files { flex: none; height: 37px; display: flex; padding: 5px 0 0 25px; border-bottom: 5px solid #3b4453; }
.file { height: 27px; border-radius: 12px 12px 2px 2px; background: #2f3743; text-align: left; padding: 0 16px 0 10px; margin-right: 2px; display: flex; align-items: center; justify-content: space-between; white-space: nowrap; }
.file.home { padding-left: 14px; }
.file.active { background: #3b4453; color: #eee; }
.addtab { width: 24px; height: 20px; margin: 4px 0 0 8px; background: #2f3743; border-radius: 4px 8px; font-size: 20px; line-height: 18px; font-weight: 700; }

.work { flex: 1; display: flex; min-height: 0; background: #3b4453; }
.toolspace { width: 421px; flex: none; display: flex; }
.ts-main { width: 390px; display: flex; flex-direction: column; padding-top: 2px; }
.ts-head { height: 28px; background: #2d3340; border-radius: 0 6px 0 0; font-size: 14px; line-height: 26px; display: flex; align-items: center; gap: 5px; padding-left: 8px; color: #d6d9dd; }
.ts-tools { height: 36px; display: flex; align-items: center; gap: 16px; padding-right: 8px; }
.blank { width: 31px; height: 32px; background: #f0f0f0; margin-right: auto; }
.help { width: 15px; height: 15px; background: #eee; color: #222; font-weight: 700; font-size: 12px; line-height: 15px; }
select { appearance: none; border: 1px solid #adadad; border-radius: 0; background: #e1e1e1 url("data:image/svg+xml,%3Csvg xmlns='http://www.w3.org/2000/svg' width='10' height='6'%3E%3Cpath d='M0 0l5 5 5-5' fill='none' stroke='%23444'/%3E%3C/svg%3E") no-repeat right 5px center; color: #000; height: 24px; font-family: inherit; font-size: 12px; padding: 0 3px; }
.viewsel { width: 390px; flex: none; }
.tree { margin-top: 2px; height: 396px; flex: none; border: 1px solid #828790; border-left: 0; background: #fff; color: #000; display: flex; flex-direction: column; }
.tree-row { display: flex; height: 374px; overflow: hidden; }
.nodes { flex: 1; min-width: 0; list-style: none; padding-top: 3px; overflow: hidden; }
.nodes li { height: 24px; display: flex; align-items: center; white-space: nowrap; line-height: 24px; }
.root { padding-left: 8px; }
.root svg { margin-right: 7px; }
.child { margin-left: 13px; border-left: 1px dotted #888; padding-left: 13px; position: relative; }
.child::before { content: ""; position: absolute; left: 18px; top: 0; bottom: 0; border-left: 1px dotted #888; }
.child svg { margin-right: 7px; }
.tog { position: relative; width: 11px; height: 11px; border: 1px solid #919191; background: linear-gradient(#2b4fa0, #2b4fa0) center / 7px 1px no-repeat, linear-gradient(#2b4fa0, #2b4fa0) center / 1px 7px no-repeat, #f3f3f3; flex: none; }
.tog.minus { background: linear-gradient(#2b4fa0, #2b4fa0) center / 7px 1px no-repeat, #f3f3f3; }
.dots { width: 6px; border-top: 1px dotted #888; flex: none; }
.dots.long { width: 11px; margin-left: 6px; }
.vbar { display: flex; flex-direction: column; background: #f0f0f0; flex: none; width: 21px; }
.hbar { display: flex; align-items: center; background: #f0f0f0; flex: 1; }
.vbar path, .hbar path { fill: none; stroke: #555; stroke-width: 2; }
.thumb { background: #cdcdcd; display: block; flex: none; }
.vbar .end { margin-top: auto; }
.hbar .end { margin-left: auto; }
.tree-v { height: 225px; width: 19px; }
.tree-h { width: 170px; height: 19px; }
.tree-end { margin-right: 22px; }
.itemview { margin: 8px 0; flex: 1; border: 1px solid #a0a4a8; border-left: 0; }
.sidetabs { width: 27px; padding-top: 32px; }
.sidetabs button { display: flex; align-items: center; justify-content: center; width: 27px; height: 160px; background: #2d3340; border: 1px solid #1f252e; border-left: 0; border-radius: 0 6px 6px 0; color: #b8bcc3; }
.sidetabs button.active { background: #3b4453; color: #eee; }
.sidetabs span { writing-mode: vertical-rl; transform: rotate(180deg); line-height: 20px; }

.center { flex: 1; min-width: 0; display: flex; flex-direction: column; }
.viewport { flex: 1; background: #212830; overflow: hidden; }
.viewport svg { overflow: hidden; }
.vp { fill: #e6e6e6; font-size: 14px; }
.ucs { fill: #f4f4f4; font-size: 20px; font-weight: 300; }
.glow { fill: #b9cfff; font-family: "Liberation Sans", sans-serif; filter: drop-shadow(0 0 1px #2d5fc8); }
.cells { fill: #f4f4f4; font-family: "Liberation Sans", sans-serif; font-size: 15px; text-anchor: middle; }
.cmd { flex: none; height: 78px; padding-top: 3px; display: flex; }
.cmdgrip { width: 31px; background: #2d3340; display: flex; flex-direction: column; align-items: center; gap: 10px; padding: 5px 2px 0 0; }
.console { flex: 1; font-family: "Liberation Mono", monospace; font-size: 15px; color: #111; display: flex; flex-direction: column; }
.log { background: #c8c8c8; height: 48px; padding: 9px 3px 0; line-height: 19px; border-bottom: 1px solid #222933; }
.prompt { flex: 1; background: #fff; display: flex; align-items: center; gap: 8px; padding-left: 5px; border-bottom: 2px solid #bbb; }
.prompt input { flex: 1; border: 0; outline: 0; padding: 0; background: none; font: italic 15px "Liberation Mono", monospace; }
.prompt input::placeholder { color: #777; opacity: 1; }
.dock { width: 358px; flex: none; }

.layouts { flex: none; height: 26px; padding-left: 15px; display: flex; border-top: 1px solid #3b4453; }
.layouts button { width: 51px; height: 21px; background: #2d3541; border-radius: 2px 2px 10px 10px; margin-right: 2px; line-height: 20px; }
.layouts .model { width: 70px; background: #3b4453; color: #fff; font-weight: 700; font-size: 13px; }
.layouts .addlayout { width: 26px; margin-left: 6px; font-size: 18px; font-weight: 700; line-height: 18px; }

.status { flex: none; height: 32px; display: flex; justify-content: flex-end; gap: 2px; padding-bottom: 1px; color: #e8eaec; }
.status > * { background: #3b4453; height: 30px; }
.coords { width: 263px; text-align: right; padding-right: 7px; line-height: 30px; white-space: nowrap; }
.cell { display: flex; align-items: center; justify-content: space-evenly; white-space: nowrap; flex: none; }
.status .space { width: 60px; }
.cell.on { background: #5f8fc9; }

.taskbar { flex: none; height: 50px; display: flex; background: #1c1c1c; color: #fff; }
.taskbar button { display: flex; align-items: center; justify-content: center; flex: none; }
.start { width: 60px; }
.search { width: 430px; background: #f2f2f2; border: 1px solid #bbb; display: flex; align-items: center; padding-left: 14px; gap: 15px; }
.search input { border: 0; background: none; outline: 0; flex: 1; padding: 0; font: 17px "Open Sans", sans-serif; }
.search input::placeholder { color: #333; opacity: 1; }
.taskbar .sys { width: 61px; }
.taskbar .app { width: 62px; position: relative; }
.app.open::after { content: ""; position: absolute; left: 6px; right: 5px; bottom: 0; height: 3px; background: #fb8d72; }
.app.current { background: #4a4a4a; }
.app.current::after { left: 0; right: 0; }
.tray { margin-left: auto; display: flex; align-items: center; }
.tray > svg:first-child { margin-right: 2px; }
.lang { margin-left: 11px; width: 32px; font-size: 14px; }
.clock { width: 76px; margin: 0 22px 0 10px; text-align: center; display: flex; flex-direction: column; line-height: 23px; font-size: 14px; }
.peek { width: 7px; height: 50px; margin-left: 12px; border-left: 1px solid #666; }
.note { margin-top: 4px; }

.dialog { position: absolute; background: #f0f0f0; color: #000; display: flex; flex-direction: column; border: 1px solid #4a4a4e; font-size: 12px; }
.props { left: 911px; right: 0; top: 0; height: 583px; }
.style { left: 1068px; top: 118px; width: 780px; height: 844px; border-color: #666; box-shadow: 0 4px 18px rgba(0, 0, 0, .45); }
.caption { height: 37px; flex: none; background: #fff; display: flex; align-items: center; padding-left: 9px; }
.caption h1 { font-size: 14px; line-height: 20px; margin: 0 auto 0 5px; white-space: nowrap; }
.faded h1 { color: #8c8c8c; }
.caption button { width: 59px; height: 36px; display: flex; align-items: center; justify-content: center; flex: none; align-self: flex-start; }
.caption .close { background: #e81123; }
.dbody { flex: 1; display: flex; flex-direction: column; padding: 8px 7px 0; min-height: 0; }
.tabs { display: flex; align-items: flex-end; height: 23px; padding-left: 2px; flex: none; }
.tabs button { position: relative; height: 21px; text-align: left; padding: 0 0 2px 3px; border: 1px solid #dcdcdc; border-right: 2px solid #777; border-bottom: 0; white-space: nowrap; flex: none; line-height: 18px; }
.tabs .active { background: #fff; height: 23px; padding: 0 0 4px 4px; }
.underline { position: absolute; left: 2px; top: 29px; z-index: 1; }
.page { flex: 1; min-height: 0; background: #fafafa; border: 1px solid #e3e3e3; border-right: 2px solid #777; border-bottom: 2px solid #777; padding: 13px 16px 13px 17px; display: flex; flex-direction: column; align-items: flex-start; }
.page > label, .caption-text { line-height: 18px; margin-bottom: 1px; }
.page > .second { margin-top: 12px; }
.field { width: 471px; height: 24px; border: 1px solid #7a7a7a; background: #fff; padding: 0 5px; font: 12px "Open Sans", sans-serif; flex: none; }
.area { height: 80px; resize: none; }
.group { width: 640px; flex: none; margin-top: 8px; background: #f0f0f0; height: 272px; display: flex; flex-direction: column; justify-content: space-between; align-items: flex-start; padding-bottom: 7px; }
fieldset { width: 640px; margin: 0; padding: 12px 13px 18px; border: 1px solid #dcdcdc; }
legend { padding: 0 3px; margin-left: -8px; line-height: 16px; }
.stylecombo { width: 300px; height: 24px; background: #fff; border: 1px solid #7a7a7a; display: flex; align-items: center; gap: 2px; padding-left: 2px; font: 14px "Liberation Sans", sans-serif; }
.check { display: flex; align-items: center; gap: 4px; line-height: 18px; }
.check input { appearance: none; width: 16px; height: 16px; border: 1px solid #333; background: #fff; margin: 0; display: grid; place-items: center; }
.check input:checked::before { content: ""; width: 9px; height: 4px; border: solid #333; border-width: 0 0 2px 2px; transform: translateY(-1px) rotate(-45deg); }
.buttons { flex: none; height: 50px; display: flex; justify-content: flex-end; gap: 9px; align-items: center; padding: 4px 1px 0 0; }
.buttons button { width: 89px; height: 24px; background: #e1e1e1; border: 1px solid #adadad; }
.buttons .default { border: 2px solid #0078d7; }
.note-edit { position: absolute; left: 29px; top: 302px; color: #f00; font-family: "Liberation Sans", sans-serif; font-size: 40px; line-height: 46px; }
.note-edit svg { margin: 0 0 8px 7px; }
.dir { width: 196px; flex: none; }
.listbox { width: 728px; height: 496px; border: 1px solid #828790; display: flex; flex-direction: column; flex: none; background: #f5f5f5; }
.listtop { display: flex; height: 471px; }
.tablewrap { flex: 1; }
table { border-collapse: collapse; table-layout: fixed; width: 100%; font-size: 14px; color: #404040; }
.c1 { width: 229px; } .c2 { width: 71px; } .c3 { width: 178px; } .c4 { width: 70px; } .c5 { width: 88px; }
th { height: 27px; padding: 0 0 0 8px; font-weight: 400; text-align: left; background: #eee; border-right: 1px solid #d8d8d8; white-space: nowrap; }
td { height: 20px; padding: 0 0 0 2px; line-height: 18px; white-space: nowrap; overflow: hidden; }
.sel { background: #0078d7; color: #fff; }
.focus { outline: 1px dotted #e0a030; outline-offset: -1px; }
.bulb { padding-left: 4px; }
.col span { display: flex; align-items: center; gap: 3px; padding-left: 2px; }
.swatch { width: 16px; height: 16px; border: 1px solid #333; flex: none; }
.list-v { height: 255px; width: 19px; margin-top: 176px; }
.list-h { width: 543px; height: 19px; }
.list-end { margin-right: 23px; }
.grip { position: absolute; right: 0; bottom: 0; }
</style>
